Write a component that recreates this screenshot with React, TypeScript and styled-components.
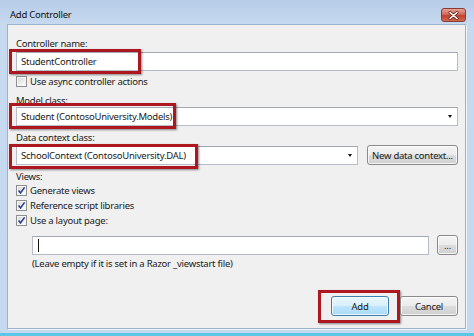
import styled, { createGlobalStyle } from "styled-components";

const GlobalStyle = createGlobalStyle`
  html, body {
    margin: 0;
    padding: 0;
  }
  body {
    background: #c6daf0;
    font-family: "Noto Sans", "Open Sans", sans-serif;
    font-size: 9.5px;
    letter-spacing: -0.25px;
    color: #1a1a1a;
  }
`;

const Window = styled.div`
  box-sizing: border-box;
  width: 474px;
  height: 336px;
  display: flex;
  flex-direction: column;
  padding: 0 8px 4px 7px;
  background: linear-gradient(180deg, #b7cce7 0%, #c6d9ef 24px, #c4d8ef 100%);
  border-bottom: 3px solid #5cc6e6;
`;

const TitleBar = styled.div`
  height: 24px;
  box-sizing: border-box;
  display: flex;
  align-items: flex-start;
  justify-content: space-between;
  padding: 8px 0 0 3px;
`;

const Title = styled.span`
  line-height: 14px;
  color: #111;
`;

const CloseButton = styled.div`
  width: 25px;
  height: 14px;
  box-sizing: border-box;
  display: flex;
  align-items: center;
  justify-content: center;
  border: 1px solid #8c3a34;
  border-radius: 3px;
  background: linear-gradient(180deg, #e6a394 0%, #d0695b 45%, #c2402d 55%, #cf6a52 100%);
`;

const Panel = styled.div`
  flex: 1;
  display: flex;
  flex-direction: column;
  padding: 12px 7px 12px 8px;
  background: #f0f0f0;
  border: 1px solid #9db2cc;
  box-shadow: 1px 1px 0 rgba(255, 255, 255, 0.7);
`;

const FieldLabel = styled.div<{ $mt?: number; $indent?: number }>`
  height: 13px;
  line-height: 13px;
  margin-top: ${(p) => p.$mt ?? 0}px;
  margin-left: ${(p) => p.$indent ?? 0}px;
  white-space: nowrap;
`;

const TextBox = styled.div<{ $mt?: number; $width?: number }>`
  position: relative;
  box-sizing: border-box;
  height: 19px;
  margin-top: ${(p) => p.$mt ?? 0}px;
  ${(p) => (p.$width ? `width: ${p.$width}px; flex: none;` : "")}
  display: flex;
  align-items: center;
  padding: 0 4px;
  background: #fff;
  border: 1px solid #b6bdc8;
  border-top-color: #a3a9b3;
  white-space: nowrap;
`;

const ComboBox = styled(TextBox)`
  justify-content: space-between;
  padding-right: 5px;
`;

const DropArrow = styled.span`
  width: 0;
  height: 0;
  border-left: 2.5px solid transparent;
  border-right: 2.5px solid transparent;
  border-top: 3px solid #111;
`;

const Caret = styled.span`
  width: 1px;
  height: 13px;
  background: #111;
  margin-left: 1px;
`;

const Row = styled.div<{ $mt?: number; $indent?: number; $gap: number }>`
  display: flex;
  align-items: center;
  gap: ${(p) => p.$gap}px;
  margin-top: ${(p) => p.$mt ?? 0}px;
  margin-left: ${(p) => p.$indent ?? 0}px;
`;

const CheckRow = styled.div<{ $mt?: number }>`
  height: 15px;
  display: flex;
  align-items: center;
  gap: 3px;
  margin-top: ${(p) => p.$mt ?? 0}px;
  white-space: nowrap;
`;

const CheckBox = styled.span<{ $checked?: boolean }>`
  box-sizing: border-box;
  width: 11px;
  height: 11px;
  display: flex;
  align-items: center;
  justify-content: center;
  border: 1px solid #8e8f8f;
  background: linear-gradient(135deg, #d6d6d6 0%, #f4f4f4 70%, #ffffff 100%);
  box-shadow: inset 0 0 0 1px #f7f7f7;
`;

const Button = styled.div<{ $width: number; $default?: boolean }>`
  position: relative;
  box-sizing: border-box;
  width: ${(p) => p.$width}px;
  height: 20px;
  flex: none;
  display: flex;
  align-items: center;
  justify-content: center;
  border: 1px solid ${(p) => (p.$default ? "#3c7fb1" : "#8a8a8a")};
  border-radius: 3px;
  background: ${(p) =>
    p.$default
      ? "linear-gradient(180deg, #eaf6fd 0%, #d9f0fc 50%, #bee6fd 50%, #a9dbf6 100%)"
      : "linear-gradient(180deg, #f4f4f4 0%, #ebebeb 50%, #dddddd 50%, #d0d0d0 100%)"};
  box-shadow: inset 0 0 0 1px rgba(255, 255, 255, 0.75);
  white-space: nowrap;
`;

const ButtonRow = styled.div`
  margin-top: auto;
  display: flex;
  justify-content: flex-end;
  gap: 11px;
`;

const Highlight = styled.span<{ $left: number; $top: number; $width: number; $height: number }>`
  position: absolute;
  left: ${(p) => p.$left}px;
  top: ${(p) => p.$top}px;
  width: ${(p) => p.$width}px;
  height: ${(p) => p.$height}px;
  box-sizing: border-box;
  border: 3px solid #ad1720;
  box-shadow: 1px 1px 2px rgba(0, 0, 0, 0.45);
  pointer-events: none;
`;

function CheckMark() {
  return (
    <svg width="9" height="9" viewBox="0 0 9 9">
      <path d="M1.6 4.6 L3.5 7 L7.6 1.4" fill="none" stroke="#2d3f8f" strokeWidth="1.6" />
    </svg>
  );
}

function CloseGlyph() {
  return (
    <svg width="11" height="9" viewBox="0 0 11 9">
      <path d="M2 1.5 L9 7.5 M9 1.5 L2 7.5" stroke="#6b2620" strokeWidth="3" strokeLinecap="round" />
      <path d="M2 1.5 L9 7.5 M9 1.5 L2 7.5" stroke="#ffffff" strokeWidth="1.6" strokeLinecap="round" />
    </svg>
  );
}

function Check({ label, checked, mt }: { label: string; checked?: boolean; mt?: number }) {
  return (
    <CheckRow $mt={mt}>
      <CheckBox $checked={checked}>{checked && <CheckMark />}</CheckBox>
      {label}
    </CheckRow>
  );
}

export default function App() {
  return (
    <>
      <GlobalStyle />
      <Window>
        <TitleBar>
          <Title>Add Controller</Title>
          <CloseButton>
            <CloseGlyph />
          </CloseButton>
        </TitleBar>
        <Panel>
          <FieldLabel>Controller name:</FieldLabel>
          <TextBox $mt={2}>
            StudentController
            <Highlight $left={-8} $top={-4} $width={132} $height={25} />
          </TextBox>
          <Check mt={3} label="Use async controller actions" />

          <FieldLabel $mt={5}>Model class:</FieldLabel>
          <ComboBox>
            Student (ContosoUniversity.Models)
            <DropArrow />
            <Highlight $left={-8} $top={-5} $width={167} $height={26} />
          </ComboBox>

          <FieldLabel $mt={5}>Data context class:</FieldLabel>
          <Row $mt={1} $gap={9}>
            <ComboBox $width={342}>
              SchoolContext (ContosoUniversity.DAL)
              <DropArrow />
              <Highlight $left={-8} $top={-3} $width={189} $height={25} />
            </ComboBox>
            <Button $width={91}>New data context...</Button>
          </Row>

          <FieldLabel $mt={5}>Views:</FieldLabel>
          <Check checked label="Generate views" />
          <Check checked label="Reference script libraries" />
          <Check checked label="Use a layout page:" />
          <Row $mt={7} $indent={16} $gap={8}>
            <TextBox $width={397}>
              <Caret />
            </TextBox>
            <Button $width={21}>...</Button>
          </Row>
          <FieldLabel $mt={2} $indent={16}>
            (Leave empty if it is set in a Razor _viewstart file)
          </FieldLabel>

          <ButtonRow>
            <Button $width={58} $default>
              Add
              <Highlight $left={-14} $top={-7} $width={82} $height={33} />
            </Button>
            <Button $width={58}>Cancel</Button>
          </ButtonRow>
        </Panel>
      </Window>
    </>
  );
}
